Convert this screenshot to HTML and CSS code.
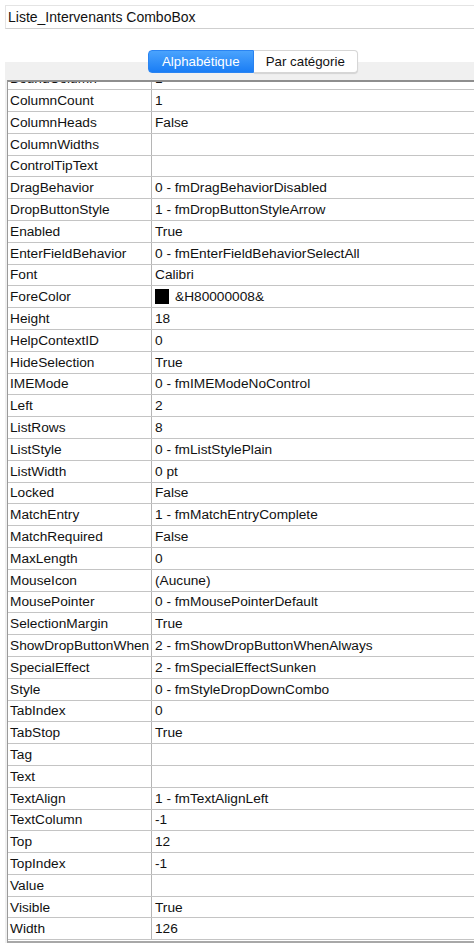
FILE: index.html
```html
<!DOCTYPE html>
<html lang="fr">
<head>
<meta charset="utf-8">
<title>Propriétés</title>
<link rel="stylesheet" href="styles.css">
</head>
<body>
<div class="title">Liste_Intervenants ComboBox</div>
<div class="seg">
  <div class="seg-btn active">Alphabétique</div>
  <div class="seg-btn">Par catégorie</div>
</div>
<div class="panel">
  <div class="grid-frame">
    <div class="rows">
      <div class="row"><div class="k">BoundColumn</div><div class="v">1</div></div>
      <div class="row"><div class="k">ColumnCount</div><div class="v">1</div></div>
      <div class="row"><div class="k">ColumnHeads</div><div class="v">False</div></div>
      <div class="row"><div class="k">ColumnWidths</div><div class="v"></div></div>
      <div class="row"><div class="k">ControlTipText</div><div class="v"></div></div>
      <div class="row"><div class="k">DragBehavior</div><div class="v">0 - fmDragBehaviorDisabled</div></div>
      <div class="row"><div class="k">DropButtonStyle</div><div class="v">1 - fmDropButtonStyleArrow</div></div>
      <div class="row"><div class="k">Enabled</div><div class="v">True</div></div>
      <div class="row"><div class="k">EnterFieldBehavior</div><div class="v">0 - fmEnterFieldBehaviorSelectAll</div></div>
      <div class="row"><div class="k">Font</div><div class="v">Calibri</div></div>
      <div class="row"><div class="k">ForeColor</div><div class="v"><span class="swatch"></span>&amp;H80000008&amp;</div></div>
      <div class="row"><div class="k">Height</div><div class="v">18</div></div>
      <div class="row"><div class="k">HelpContextID</div><div class="v">0</div></div>
      <div class="row"><div class="k">HideSelection</div><div class="v">True</div></div>
      <div class="row"><div class="k">IMEMode</div><div class="v">0 - fmIMEModeNoControl</div></div>
      <div class="row"><div class="k">Left</div><div class="v">2</div></div>
      <div class="row"><div class="k">ListRows</div><div class="v">8</div></div>
      <div class="row"><div class="k">ListStyle</div><div class="v">0 - fmListStylePlain</div></div>
      <div class="row"><div class="k">ListWidth</div><div class="v">0 pt</div></div>
      <div class="row"><div class="k">Locked</div><div class="v">False</div></div>
      <div class="row"><div class="k">MatchEntry</div><div class="v">1 - fmMatchEntryComplete</div></div>
      <div class="row"><div class="k">MatchRequired</div><div class="v">False</div></div>
      <div class="row"><div class="k">MaxLength</div><div class="v">0</div></div>
      <div class="row"><div class="k">MouseIcon</div><div class="v">(Aucune)</div></div>
      <div class="row"><div class="k">MousePointer</div><div class="v">0 - fmMousePointerDefault</div></div>
      <div class="row"><div class="k">SelectionMargin</div><div class="v">True</div></div>
      <div class="row"><div class="k">ShowDropButtonWhen</div><div class="v">2 - fmShowDropButtonWhenAlways</div></div>
      <div class="row"><div class="k">SpecialEffect</div><div class="v">2 - fmSpecialEffectSunken</div></div>
      <div class="row"><div class="k">Style</div><div class="v">0 - fmStyleDropDownCombo</div></div>
      <div class="row"><div class="k">TabIndex</div><div class="v">0</div></div>
      <div class="row"><div class="k">TabStop</div><div class="v">True</div></div>
      <div class="row"><div class="k">Tag</div><div class="v"></div></div>
      <div class="row"><div class="k">Text</div><div class="v"></div></div>
      <div class="row"><div class="k">TextAlign</div><div class="v">1 - fmTextAlignLeft</div></div>
      <div class="row"><div class="k">TextColumn</div><div class="v">-1</div></div>
      <div class="row"><div class="k">Top</div><div class="v">12</div></div>
      <div class="row"><div class="k">TopIndex</div><div class="v">-1</div></div>
      <div class="row"><div class="k">Value</div><div class="v"></div></div>
      <div class="row"><div class="k">Visible</div><div class="v">True</div></div>
      <div class="row"><div class="k">Width</div><div class="v">126</div></div>
    </div>
  </div>
</div>
</body>
</html>
```
FILE: styles.css
```css
html, body {
  margin: 0;
  padding: 0;
  background: #ffffff;
  overflow: hidden;
}
body {
  font-family: "Liberation Sans", Arial, sans-serif;
  font-size: 13.7px;
  color: #111;
  width: 474px;
  height: 943px;
}
.title {
  margin: 5px 0 0 5px;
  height: 22px;
  border: 1px solid #e4e4e4;
  border-bottom-color: #cfcfcf;
  border-right: none;
  padding-left: 2px;
  line-height: 22px;
  font-size: 14px;
}
.seg {
  position: relative;
  z-index: 2;
  display: flex;
  margin: 21px 0 0 148px;
  width: 210px;
  height: 23px;
}
.seg-btn {
  flex: 1;
  display: flex;
  align-items: center;
  justify-content: center;
  font-size: 13.3px;
  box-sizing: border-box;
}
.seg-btn.active {
  background: linear-gradient(#4aa3fd, #1a7df5);
  color: #fff;
  border-radius: 4px 0 0 4px;
  border: 1px solid #2a84f2;
}
.seg-btn:not(.active) {
  background: #fff;
  border: 1px solid #d6d6d6;
  border-left: none;
  border-radius: 0 4px 4px 0;
  box-shadow: 0 1px 1px rgba(0,0,0,0.12);
  color: #111;
}
.panel {
  margin: -11px 0 0 5px;
  background: #f0f0f0;
  padding: 18px 0 0 2px;
  height: 900px;
}
.grid-frame {
  border-top: 2px solid #8e8e8e;
  border-left: 1px solid #9a9a9a;
  border-bottom: 3px solid #a8a8a8;
  background: #fff;
  overflow: hidden;
  height: 858.6px;
}
.rows {
  margin-top: -13.6px;
}
.row {
  display: flex;
  height: 21.8px;
  box-sizing: border-box;
  border-bottom: 1px solid #c4c4c4;
}
.k {
  width: 141px;
  flex: none;
  border-right: 1px solid #b5b5b5;
  padding-left: 2px;
  display: flex;
  align-items: center;
  white-space: nowrap;
  overflow: hidden;
}
.v {
  flex: 1;
  padding-left: 3px;
  display: flex;
  align-items: center;
  white-space: nowrap;
}
.swatch {
  display: inline-block;
  width: 14px;
  height: 15px;
  background: #000;
  margin: 0 6px 0 0;
}
```
